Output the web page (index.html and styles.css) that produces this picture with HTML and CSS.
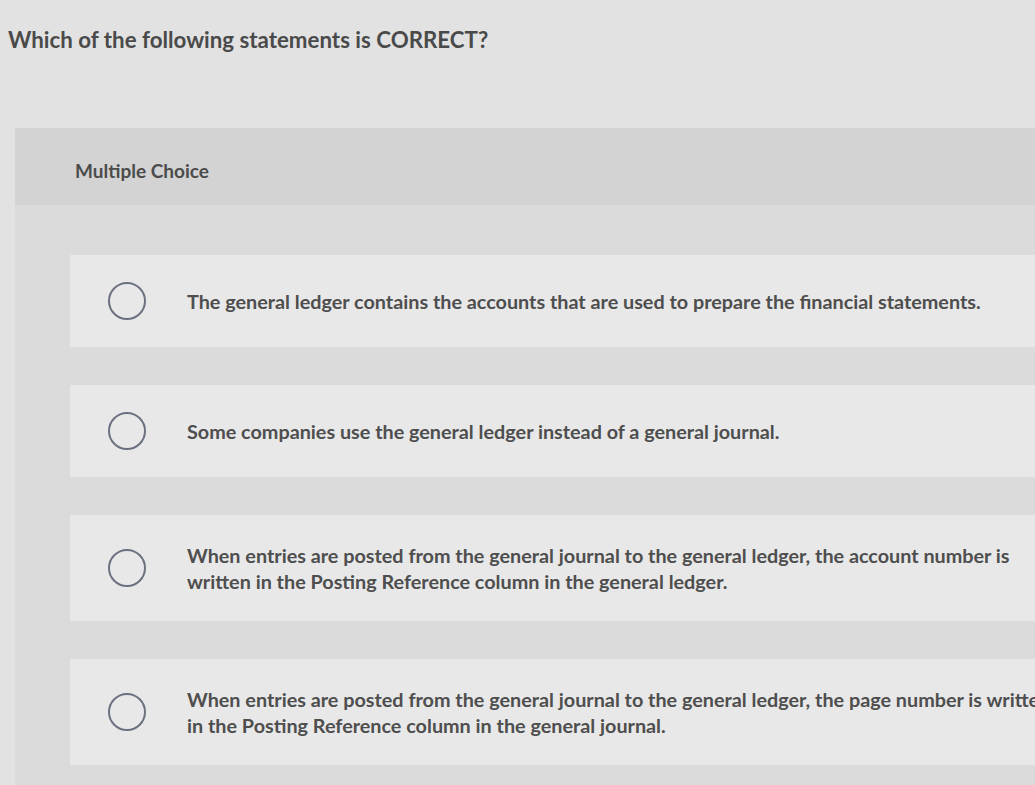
FILE: index.html
```html
<!DOCTYPE html>
<html lang="en">
<head>
<meta charset="utf-8">
<title>Multiple Choice</title>
<link rel="stylesheet" href="styles.css">
</head>
<body>
<div class="page">
  <h1 class="question">Which of the following statements is CORRECT?</h1>
  <section class="panel">
    <div class="panel-header">Multiple Choice</div>
    <div class="panel-body">
      <label class="option">
        <span class="radio"></span>
        <span class="option-text">The general ledger contains the accounts that are used to prepare the financial statements.</span>
      </label>
      <label class="option">
        <span class="radio"></span>
        <span class="option-text">Some companies use the general ledger instead of a general journal.</span>
      </label>
      <label class="option">
        <span class="radio"></span>
        <span class="option-text">When entries are posted from the general journal to the general ledger, the account number is written in the Posting Reference column in the general ledger.</span>
      </label>
      <label class="option">
        <span class="radio"></span>
        <span class="option-text">When entries are posted from the general journal to the general ledger, the page number is written in the Posting Reference column in the general journal.</span>
      </label>
    </div>
  </section>
</div>
</body>
</html>
```

FILE: styles.css
```css
html, body {
  margin: 0;
  padding: 0;
  overflow: hidden;
  height: 100%;
}
body {
  background: #e2e2e2;
  font-family: Lato, "Liberation Sans", sans-serif;
  color: #4e4e4e;
}
.page {
  width: 1035px;
  height: 785px;
  overflow: hidden;
}
.question {
  margin: 0;
  padding: 26px 0 0 8px;
  font-size: 22.3px;
  font-weight: 700;
  line-height: 28px;
  color: #4a4a4a;
}
.panel {
  margin: 74px 0 0 15px;
  background: #dbdbdb;
}
.panel-header {
  background: #d3d3d3;
  height: 77px;
  box-sizing: border-box;
  padding: 8px 0 0 60px;
  display: flex;
  align-items: center;
  font-size: 19px;
  font-weight: 700;
  color: #4c4c4c;
}
.panel-body {
  padding: 50px 0 30px 55px;
  display: flex;
  flex-direction: column;
  gap: 38px;
}
.option {
  display: flex;
  align-items: center;
  background: #e8e8e8;
  padding: 27px 0 27px 38px;
  min-height: 38px;
  width: 1100px;
}
.radio {
  flex: 0 0 auto;
  width: 38px;
  height: 38px;
  border: 2px solid #6c7180;
  border-radius: 50%;
  box-sizing: border-box;
  margin-right: 41px;
}
.option-text {
  flex: 0 0 870px;
  font-size: 19.8px;
  font-weight: 700;
  line-height: 26px;
  color: #4e4e4e;
}
```
